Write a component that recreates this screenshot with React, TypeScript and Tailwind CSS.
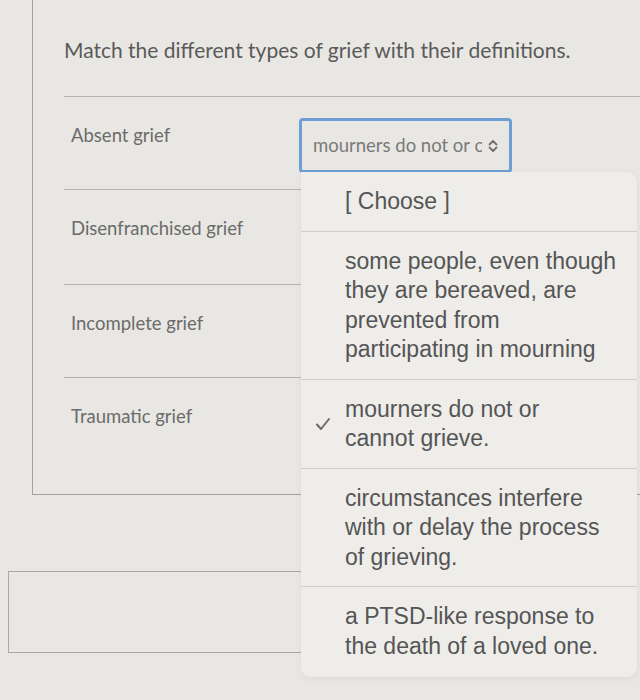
import React from 'react';

const terms = ['Absent grief', 'Disenfranchised grief', 'Incomplete grief', 'Traumatic grief'];

const options: { lines: string[]; selected?: boolean }[] = [
  { lines: ['[ Choose ]'] },
  { lines: ['some people, even though', 'they are bereaved, are', 'prevented from', 'participating in mourning'] },
  { lines: ['mourners do not or', 'cannot grieve.'], selected: true },
  { lines: ['circumstances interfere', 'with or delay the process', 'of grieving.'] },
  { lines: ['a PTSD-like response to', 'the death of a loved one.'] },
];

const UpDown: React.FC = () => (
  <svg width="14" height="14" viewBox="0 0 14 14" fill="none" stroke="#6f6f6f" strokeWidth="1.8" strokeLinecap="round" strokeLinejoin="round">
    <path d="M3.5 5.5 L7 2 L10.5 5.5" />
    <path d="M3.5 8.5 L7 12 L10.5 8.5" />
  </svg>
);

const Check: React.FC = () => (
  <svg width="16" height="14" viewBox="0 0 16 14" fill="none" stroke="#6a6a6a" strokeWidth="2" strokeLinecap="round" strokeLinejoin="round">
    <path d="M2 7.5 L6 12 L14 2" />
  </svg>
);

const App: React.FC = () => {
  return (
    <div className="relative w-[640px] h-[700px] overflow-hidden bg-[#e8e7e3] font-['Lato',sans-serif]">
      {/* question card */}
      <div className="ml-[32px] w-[608px] h-[495px] border-l border-b border-[#a3a29e] pl-[31px] pt-[35px]">
        <h1 className="text-[21px] leading-[30px] text-[#5a5a5a] mb-[31px]">
          Match the different types of grief with their definitions.
        </h1>
        <div className="border-t border-[#b5b4b0]" />
        {terms.map((t, i) => (
          <div
            key={t}
            className={`flex w-[237px] ${i < terms.length - 1 ? 'border-b border-[#b5b4b0]' : ''} ${i === 1 ? 'h-[95px]' : 'h-[93px]'}`}
          >
            <div className="shrink-0 w-[237px] pl-[7px] pt-[26px] text-[18.5px] leading-[24px] text-[#6b6b6b]">{t}</div>
            {i === 0 ? (
              <div className="shrink-0 mt-[21px] -ml-[2px] w-[213px] h-[55px] rounded-[4px] border-[3px] border-[#6d9ed4] flex items-center pl-[11px] pr-[9px] gap-[4px]">
                <span className="flex-1 overflow-hidden whitespace-nowrap text-[18.5px] text-[#7a7a7a]">mourners do not or cannot grieve.</span>
                <UpDown />
              </div>
            ) : (
              <div className="shrink-0 mt-[21px] w-[213px] h-[55px] border border-[#a9a8a4]" />
            )}
          </div>
        ))}
      </div>

      {/* lower response box */}
      <div className="ml-[8px] mt-[76px] w-[300px] h-[82px] border border-[#a9a8a4]" />

      {/* open option picker */}
      <div className="absolute left-[301px] top-[172px] w-[336px] rounded-b-[10px] rounded-tr-[10px] bg-[#eeedea] shadow-[0_2px_8px_rgba(0,0,0,0.05)] font-['Liberation_Sans',Arial,sans-serif] text-[23px] leading-[29.5px] text-[#555]">
        {options.map((o, i) => (
          <div
            key={i}
            className={`relative pl-[44px] pt-[15px] pb-[14px] ${i < options.length - 1 ? 'border-b border-[#cfceca]' : 'pb-[16px]'}`}
          >
            {o.selected && (
              <span className="absolute left-[14px] top-[37px]">
                <Check />
              </span>
            )}
            {o.lines.map((l) => (
              <div key={l} className="whitespace-nowrap">{l}</div>
            ))}
          </div>
        ))}
      </div>
    </div>
  );
};

export default App;
